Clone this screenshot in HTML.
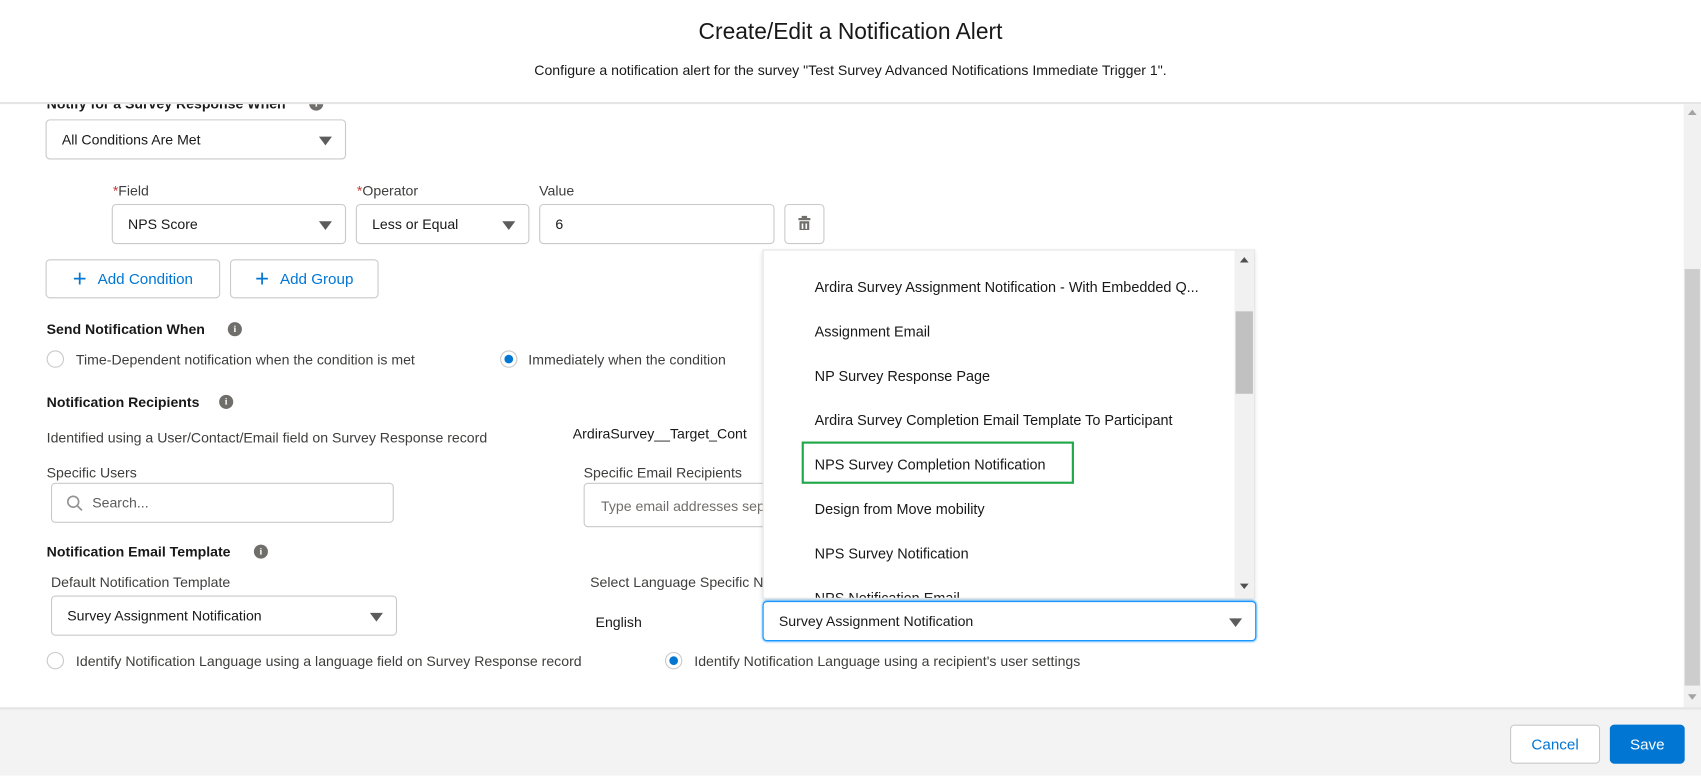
<!DOCTYPE html>
<html><head><meta charset="utf-8"><style>
html,body{margin:0;padding:0;background:#fff;overflow:hidden;width:1701px;height:773px}
#w{position:absolute;left:0;top:0;width:1568px;height:713px;transform:scale(1.0848);transform-origin:0 0;font-family:"Liberation Sans",sans-serif;font-size:13px;color:#181818}
.a{position:absolute;white-space:nowrap}
.b{font-weight:bold;font-size:13px}
.box{position:absolute;border:1px solid #c9c9c9;border-radius:4px;background:#fff;box-sizing:border-box}
.sel{display:flex;align-items:center;padding-left:14px}
.tri{position:absolute;right:12px;top:50%;margin-top:-3px;width:0;height:0;border-left:6px solid transparent;border-right:6px solid transparent;border-top:8px solid #5c5c5c}
.info{position:absolute;width:13px;height:13px;border-radius:50%;background:#706e6b;color:#fff;font-size:9px;font-weight:bold;text-align:center;line-height:13px;font-family:"Liberation Serif",serif}
.lab{color:#3e3e3c}
.req{color:#c23934}
.btn{position:absolute;border:1px solid #c9c9c9;border-radius:4px;background:#fff;color:#0176d3;box-sizing:border-box;display:flex;align-items:center;justify-content:center;font-size:14px}
.rad{position:absolute;width:16px;height:16px;border:1px solid #c9c9c9;border-radius:50%;box-sizing:border-box;background:#fff}
.rad.on::after{content:"";position:absolute;left:3px;top:3px;width:8px;height:8px;border-radius:50%;background:#0176d3}
.item{position:absolute;left:47px;font-size:13.3px;white-space:nowrap}
</style></head><body><div id="w">
<div class="a b" style="left:43px;top:88px">Notify for a Survey Response When</div>
<div class="info" style="left:285px;top:89px">i</div>
<div class="a" style="left:0;top:0;width:1568px;height:94px;background:#fff;border-bottom:2px solid #e5e5e5"></div>
<div class="a" style="left:0;width:1568px;top:18px;text-align:center;font-size:21px">Create/Edit a Notification Alert</div>
<div class="a" style="left:0;width:1568px;top:57px;text-align:center;font-size:13px">Configure a notification alert for the survey "Test Survey Advanced Notifications Immediate Trigger 1".</div>

<div class="box sel" style="left:42px;top:110px;width:277px;height:37px">All Conditions Are Met<div class="tri"></div></div>
<div class="a lab" style="left:104px;top:168px"><span class="req">*</span>Field</div>
<div class="a lab" style="left:329px;top:168px"><span class="req">*</span>Operator</div>
<div class="a lab" style="left:497px;top:168px">Value</div>
<div class="box sel" style="left:103px;top:188px;width:216px;height:37px">NPS Score<div class="tri"></div></div>
<div class="box sel" style="left:328px;top:188px;width:160px;height:37px">Less or Equal<div class="tri"></div></div>
<div class="box sel" style="left:497px;top:188px;width:217px;height:37px">6</div>
<div class="box" style="left:723px;top:188px;width:37px;height:37px"><svg width="37" height="37" viewBox="0 0 37 37" style="position:absolute;left:-1px;top:-1px"><rect x="13" y="13" width="11" height="2" fill="#706e6b"/><rect x="16" y="11" width="5" height="2" fill="#706e6b"/><path d="M14 16h9v8h-9z" fill="#706e6b"/><rect x="16" y="18" width="1.5" height="5" fill="#fff"/><rect x="19.5" y="18" width="1.5" height="5" fill="#fff"/></svg></div>
<div class="btn" style="left:42px;top:239px;width:161px;height:36px"><span style="font-size:22px;margin-right:10px;line-height:1">+</span>Add Condition</div>
<div class="btn" style="left:212px;top:239px;width:137px;height:36px"><span style="font-size:22px;margin-right:10px;line-height:1">+</span>Add Group</div>

<div class="a b" style="left:43px;top:296px">Send Notification When</div>
<div class="info" style="left:210px;top:297px">i</div>
<div class="rad" style="left:43px;top:323px"></div>
<div class="a lab" style="left:70px;top:324px">Time-Dependent notification when the condition is met</div>
<div class="rad on" style="left:461px;top:323px"></div>
<div class="a lab" style="left:487px;top:324px">Immediately when the condition</div>

<div class="a b" style="left:43px;top:363px">Notification Recipients</div>
<div class="info" style="left:202px;top:364px">i</div>
<div class="a lab" style="left:43px;top:396px">Identified using a User/Contact/Email field on Survey Response record</div>
<div class="a" style="left:528px;top:392px">ArdiraSurvey__Target_Cont</div>
<div class="a lab" style="left:43px;top:428px">Specific Users</div>
<div class="box" style="left:47px;top:445px;width:316px;height:37px"><svg width="16" height="16" style="position:absolute;left:13px;top:10px"><circle cx="6.5" cy="6.5" r="5" fill="none" stroke="#939393" stroke-width="1.5"/><path d="M10 10l4.5 4.5" stroke="#939393" stroke-width="1.6"/></svg><span class="a" style="left:37px;top:10px;color:#5c5c5c">Search...</span></div>
<div class="a lab" style="left:538px;top:428px">Specific Email Recipients</div>
<div class="box" style="left:538px;top:445px;width:180px;height:41px"><span class="a" style="left:15px;top:13px;color:#706e6b">Type email addresses sep</span></div>

<div class="a b" style="left:43px;top:501px">Notification Email Template</div>
<div class="info" style="left:234px;top:502px">i</div>
<div class="a lab" style="left:47px;top:529px">Default Notification Template</div>
<div class="box sel" style="left:47px;top:549px;width:319px;height:37px">Survey Assignment Notification<div class="tri"></div></div>
<div class="a lab" style="left:544px;top:529px">Select Language Specific N</div>
<div class="a" style="left:549px;top:566px">English</div>
<div class="rad" style="left:43px;top:601px"></div>
<div class="a lab" style="left:70px;top:602px">Identify Notification Language using a language field on Survey Response record</div>
<div class="rad on" style="left:613px;top:601px"></div>
<div class="a lab" style="left:640px;top:602px">Identify Notification Language using a recipient's user settings</div>

<div class="a" style="left:703px;top:230px;width:454px;height:322px;background:#fff;border:1px solid #e5e5e5;box-shadow:0 2px 4px rgba(0,0,0,.15);overflow:hidden;box-sizing:border-box">
  <div class="item" style="top:26px">Ardira Survey Assignment Notification - With Embedded Q...</div>
  <div class="item" style="top:67px">Assignment Email</div>
  <div class="item" style="top:108px">NP Survey Response Page</div>
  <div class="item" style="top:149px">Ardira Survey Completion Email Template To Participant</div>
  <div class="a" style="left:35px;top:176px;width:251px;height:39px;border:2px solid #22a84a;box-sizing:border-box"></div>
  <div class="item" style="top:190px">NPS Survey Completion Notification</div>
  <div class="item" style="top:231px">Design from Move mobility</div>
  <div class="item" style="top:272px">NPS Survey Notification</div>
  <div class="item" style="top:313px">NPS Notification Email</div>
  <div class="a" style="left:434px;top:0;width:18px;height:322px;background:#f1f1f1"></div>
  <div class="a" style="left:435px;top:56px;width:16px;height:76px;background:#c1c1c1"></div>
  <div class="a" style="left:439px;top:6px;border-left:4px solid transparent;border-right:4px solid transparent;border-bottom:5px solid #505050"></div>
  <div class="a" style="left:439px;top:307px;border-left:4px solid transparent;border-right:4px solid transparent;border-top:5px solid #505050"></div>
</div>
<div class="box sel" style="left:703px;top:554px;width:455px;height:37px;border-color:#1b96ff;box-shadow:0 0 2px #1b96ff">Survey Assignment Notification<div class="tri"></div></div>

<div class="a" style="left:1552px;top:96px;width:16px;height:557px;background:#f1f1f1"></div>
<div class="a" style="left:1553px;top:248px;width:14px;height:384px;background:#cdcdcd"></div>
<div class="a" style="left:1556px;top:101px;border-left:4px solid transparent;border-right:4px solid transparent;border-bottom:5px solid #a3a3a3"></div>
<div class="a" style="left:1556px;top:640px;border-left:4px solid transparent;border-right:4px solid transparent;border-top:5px solid #a3a3a3"></div>

<div class="a" style="left:0;top:652px;width:1568px;height:61px;background:#f3f3f3;border-top:2px solid #e5e5e5"></div>
<div class="btn" style="left:1392px;top:668px;width:83px;height:36px">Cancel</div>
<div class="btn" style="left:1484px;top:668px;width:69px;height:36px;background:#0176d3;border-color:#0176d3;color:#fff">Save</div>
</div></body></html>
